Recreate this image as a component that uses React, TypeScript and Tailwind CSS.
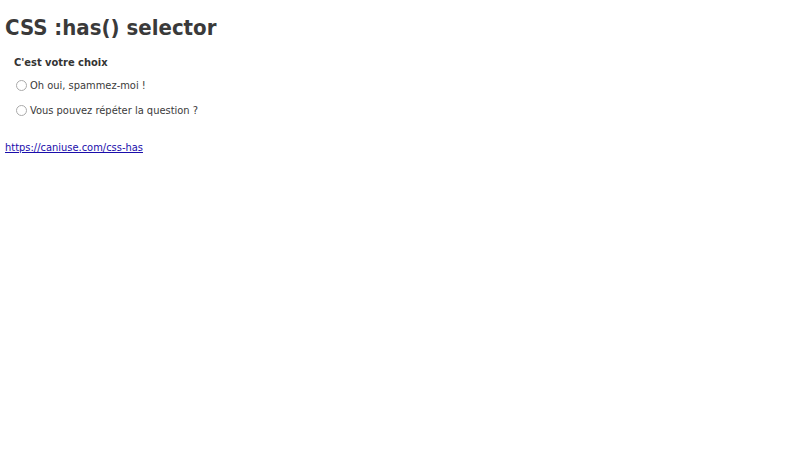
import { useState } from "react";

const choices = [
  { id: "spam", label: "Oh oui, spammez-moi !" },
  { id: "repeat", label: "Vous pouvez répéter la question ?" },
];

export default function App() {
  const [picked, setPicked] = useState<string | null>(null);

  return (
    <div className="min-h-[450px] bg-white px-[5px] font-['DejaVu_Sans_Condensed','DejaVu_Sans',sans-serif] text-[#333]">
      <h1 className="pt-[15px] text-[22px] font-bold leading-[26px] text-[#3a3a3a]">CSS :has() selector</h1>

      <fieldset className="mt-[14px] px-[9px]">
        <legend className="text-[11px] font-bold leading-[15px] text-[#333]">C'est votre choix</legend>
        <div className="mt-[7px] flex flex-col gap-[8px]">
          {choices.map((c) => (
            <label key={c.id} className="flex items-center gap-[3px] text-[11px] leading-[17px] text-[#3a3a3a]">
              <input
                type="radio"
                name="choix"
                checked={picked === c.id}
                onChange={() => setPicked(c.id)}
                className="ml-[2px] h-[11px] w-[11px] appearance-none rounded-full border border-[#aaa] bg-white checked:border-[3px] checked:border-[#1a73e8]"
              />
              {c.label}
            </label>
          ))}
        </div>
      </fieldset>

      <a href="https://caniuse.com/css-has" className="mt-[21px] block w-fit text-[11px] leading-[16px] text-[#1a0dab] underline">
        https://caniuse.com/css-has
      </a>
    </div>
  );
}
